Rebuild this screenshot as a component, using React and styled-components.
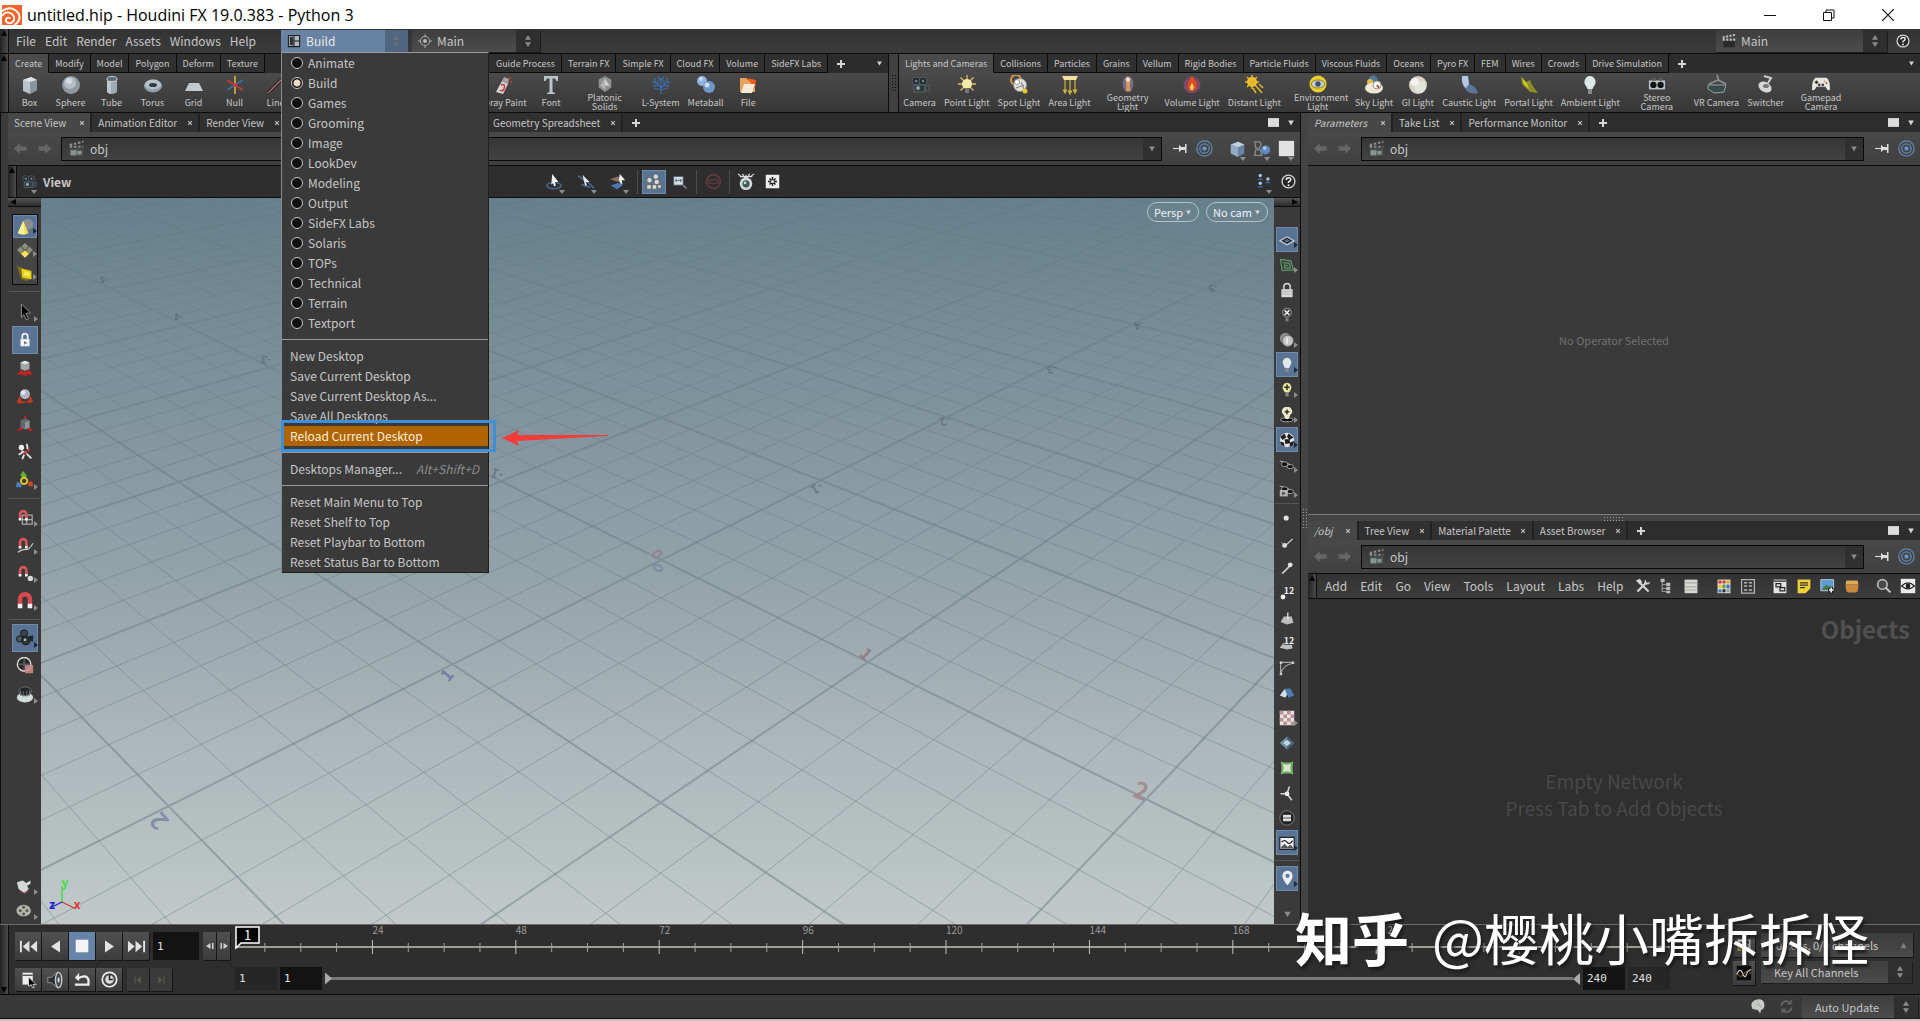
import { useState } from "react";
import styled, { createGlobalStyle, css } from "styled-components";

const GlobalStyle = createGlobalStyle`
  * { box-sizing: border-box; }
  body {
    margin: 0;
    background: #2e2e2e;
    color: #c6c6c6;
    font-family: "Noto Sans CJK SC", "Noto Sans", sans-serif;
    font-size: 12px;
    line-height: 20px;
    overflow: hidden;
  }
  button, input, select {
    font: inherit;
    color: inherit;
    background: none;
    border: 0;
    border-radius: 0;
    padding: 0;
    margin: 0;
    outline: 0;
    min-width: 0;
  }
  svg { display: block; flex: none; }
  h1, p { margin: 0; font: inherit; }
`;

/* ---------- icons ---------- */

const magnet = (
  <>
    <path d="M3 13V7a5 5 0 0 1 10 0v6h-3V7a2 2 0 0 0-4 0v6z" fill="#d8555a" />
    <path d="M3 11h3v3H3zM10 11h3v3h-3z" fill="#f2f2f2" />
  </>
);

const glasses = (
  <>
    <path d="M1 5l10 3 7 5" stroke="#aaa" fill="none" strokeWidth="1.4" />
    <ellipse cx="7" cy="9" rx="4" ry="3" fill="#111" stroke="#bbb" />
    <ellipse cx="14" cy="12" rx="4" ry="2.6" fill="#111" stroke="#bbb" />
  </>
);

const icons = {
  box: (
    <>
      <path d="M3 5l8-3 6 3v10l-7 4-7-3z" fill="#b9c3c9" />
      <path d="M3 5l7 2 7-2-6-3z" fill="#dde3e6" />
      <path d="M10 7l7-2v10l-7 4z" fill="#87949c" />
    </>
  ),
  sphere: (
    <>
      <circle cx="10" cy="10" r="9" fill="#8f9aa0" />
      <circle cx="9" cy="8" r="6" fill="#b5bec2" />
      <circle cx="8" cy="6" r="3" fill="#d6dcde" />
    </>
  ),
  tube: (
    <>
      <path d="M5 4v13q5 4 10 0V4z" fill="#9fabb2" />
      <path d="M5 4v13q2 2 4 2V5z" fill="#bcc6cb" />
      <ellipse cx="10" cy="4" rx="5" ry="2.5" fill="#5d6a72" stroke="#c5ced2" />
    </>
  ),
  torus: (
    <>
      <ellipse cx="10" cy="11" rx="9" ry="6.5" fill="#8ea0aa" />
      <ellipse cx="10" cy="9.5" rx="8" ry="5" fill="#b3c0c7" />
      <ellipse cx="10" cy="10" rx="4" ry="2" fill="#2f3a42" />
    </>
  ),
  grid: <path d="M5 8h10l4 8H1z" fill="#c3c9cc" />,
  nul: (
    <>
      <path d="M10 1v18" stroke="#d9b92a" strokeWidth="1.6" />
      <path d="M2 5l16 10" stroke="#c43a3a" strokeWidth="1.6" />
      <path d="M2 15l16-10" stroke="#3a6fa8" strokeWidth="1.6" />
      <circle cx="10" cy="10" r="2" fill="#c43a3a" />
    </>
  ),
  line: (
    <>
      <path d="M2 18L17 3" stroke="#111" strokeWidth="3" />
      <path d="M2 18L17 3" stroke="#b8747a" strokeWidth="1.4" />
    </>
  ),
  spray: (
    <>
      <path d="M3 17l6-11 6 3-5 10z" fill="#d5d5d5" />
      <path d="M9 6l2-4 5 2-1 5z" fill="#a3a3a3" />
      <path d="M8 10q5-2 3 4-2 3-4 1" stroke="#c33" strokeWidth="1.5" fill="none" />
      <circle cx="17" cy="3" r="1" fill="#d33" />
      <circle cx="18" cy="7" r="1" fill="#d33" />
    </>
  ),
  font: <path d="M3 1h14v5h-1.5L14 3.5h-2.5V17l2.500 1v1H6v-1l2.500-1V3.500H6L4.500 6H3z" fill="#b6c4cb" />,
  platonic: (
    <>
      <path d="M10 1l7 4v9l-7 5-7-5V5z" fill="#909090" />
      <path d="M10 4l5 8H5z" fill="#cfcfcf" />
      <path d="M10 4v12l-5-4z" fill="#b3b3b3" />
    </>
  ),
  lsystem: (
    <g stroke="#3d6ba8" strokeWidth="1.3" fill="none">
      <path d="M10 19v-8M10 13L4 7M10 13l6-6M10 11V3M4 7L1 7M4 7V3M16 7h3M16 7V3M10 6L7 2M10 6l3-4M10 15l-7-2M10 15l7-2M7 10L2 11M13 10l5 1M7 10V5M13 10V5" />
    </g>
  ),
  metaball: (
    <>
      <circle cx="6" cy="6" r="5" fill="#8fb3dd" />
      <circle cx="13" cy="12" r="6" fill="#6d96c9" />
      <circle cx="11" cy="10" r="2.5" fill="#c9dcf2" />
      <circle cx="5" cy="4" r="2" fill="#c9dcf2" />
    </>
  ),
  file: (
    <>
      <path d="M2 3h6l2 2h7v12H2z" fill="#e8a35c" />
      <path d="M9 3l9 2-1 9z" fill="#f05a1c" />
      <path d="M3 18l3-9h11l-3 9z" fill="#f5ead8" />
    </>
  ),
  camera: (
    <>
      <circle cx="6" cy="6" r="4" fill="#20272b" stroke="#56636b" />
      <circle cx="13" cy="6" r="4" fill="#20272b" stroke="#56636b" />
      <path d="M4 10h11v7H4zM15 12l4-2v6l-4-2z" fill="#2f3a40" stroke="#56636b" />
      <circle cx="6" cy="6" r="1.5" fill="#6d7b83" />
      <circle cx="13" cy="6" r="1.5" fill="#6d7b83" />
      <circle cx="8" cy="13" r="2" fill="#8fa0a8" />
    </>
  ),
  point: (
    <>
      <g stroke="#d9c05a" strokeWidth="1.3">
        <path d="M10 0v17M1 9h18M3.500 2.500l13 13M16.500 2.500l-13 13" />
      </g>
      <circle cx="10" cy="9" r="5" fill="#f3e9a8" />
      <path d="M8 13h4v5H8z" fill="#777" />
    </>
  ),
  spot: (
    <>
      <circle cx="7" cy="5" r="5" fill="none" stroke="#d69a50" strokeWidth="2" />
      <circle cx="11" cy="10" r="6.5" fill="#e2e2de" stroke="#8e8e8e" />
      <circle cx="8" cy="7" r="2.5" fill="#fff" stroke="#999" />
      <path d="M12 7l3 7M7 13l8-3" stroke="#777" />
      <circle cx="16" cy="16" r="2.5" fill="#e9c820" />
    </>
  ),
  area: (
    <>
      <path d="M2 1h16l-2 4H4z" fill="#f3dfa0" />
      <g stroke="#cdb43a" strokeWidth="1.2" fill="#cdb43a">
        <path d="M5 5v12M10 5v13M15 5v12M3.500 15h3L5 18zM8.500 16h3L10 19zM13.500 15h3L15 18z" />
      </g>
    </>
  ),
  geolight: (
    <>
      <ellipse cx="10" cy="10" rx="6" ry="9" fill="#756b86" />
      <path d="M10 2q4 5 2 9l1 7h-5V9q-1-4 2-7z" fill="#d99a5a" />
      <circle cx="10" cy="5" r="2.5" fill="#f4e2c0" />
    </>
  ),
  volume: (
    <>
      <circle cx="10" cy="10" r="8.5" fill="#7d4a66" />
      <path d="M10 1q7 8 4 13-4 4-8 0-2-5 4-13z" fill="#e2491d" />
      <path d="M10 8q3 4 1 7-3 1-3-2 0-2 2-5z" fill="#ffd75a" />
    </>
  ),
  distant: (
    <>
      <circle cx="8" cy="7" r="5" fill="#f0cd38" />
      <g stroke="#e3b725" strokeWidth="1.5">
        <path d="M8 0v14M1 7h14M3 2l10 10M13 2L3 12M12 11l6 7M15 9l4 4M9 13l3 5" />
      </g>
    </>
  ),
  env: (
    <>
      <circle cx="10" cy="10" r="9.5" fill="#e8cf2e" />
      <ellipse cx="10" cy="10" rx="7.5" ry="4.5" fill="#c7ced2" stroke="#8b7c1a" />
      <circle cx="10" cy="10" r="3" fill="#3f4f74" />
    </>
  ),
  sky: (
    <>
      <circle cx="9" cy="5" r="4.5" fill="#51799c" />
      <circle cx="6" cy="7" r="3" fill="#e9b940" />
      <ellipse cx="10" cy="13" rx="9" ry="5.5" fill="#ecead6" />
      <circle cx="13" cy="10" r="4" fill="#f4f4ee" stroke="#999" />
      <path d="M13 10l2 3" stroke="#b33" strokeWidth="1.5" />
    </>
  ),
  gi: (
    <>
      <circle cx="10" cy="10" r="9" fill="#d9d3c8" />
      <circle cx="12" cy="12" r="6" fill="#dfe6d6" />
      <circle cx="7" cy="7" r="4" fill="#f4f1ec" />
    </>
  ),
  caustic: (
    <>
      <path d="M3 1h6l1 8q7 2 9 9-8 2-13-4Q2 9 3 1z" fill="#5d7596" />
      <path d="M3 1h6l1 8-3 4Q2 9 3 1z" fill="#b4c8e4" />
    </>
  ),
  portal: (
    <>
      <path d="M2 1l5 6 4-2 2 5 6 8-8-1-8-8z" fill="#8f8d28" />
      <path d="M3 3l5 5 2 6-5-4z" fill="#c9c42c" />
    </>
  ),
  bulb: (
    <>
      <path d="M10 1a6 6 0 0 1 4 10l-1.500 3h-5L6 11a6 6 0 0 1 4-10z" fill="#dce8e8" />
      <path d="M8 14h4v5H8z" fill="#888" />
    </>
  ),
  stereo: (
    <>
      <path d="M1 6h18v10H1z" fill="#b9c2cc" />
      <circle cx="6" cy="11" r="3.5" fill="#111" />
      <circle cx="14" cy="11" r="3.5" fill="#111" />
      <path d="M4 3h5v3H4zM12 3h4v3h-4z" fill="#5a5a5a" />
    </>
  ),
  vr: (
    <>
      <path d="M10 0l2 6M2 9l9-4 8 4" stroke="#8b9896" strokeWidth="1.5" fill="none" />
      <path d="M1 10l13 0 5 0-2 7-10 1-6-4z" fill="#3b4a4a" stroke="#93a3a2" />
    </>
  ),
  switcher: (
    <>
      <path d="M8 1l7 2-3 5" stroke="#ccc" strokeWidth="2" fill="none" />
      <ellipse cx="9" cy="12" rx="7" ry="5" fill="#d8d8d8" transform="rotate(30 9 12)" />
      <ellipse cx="10" cy="11" rx="3" ry="2" fill="#777" />
    </>
  ),
  gamepad: (
    <>
      <path d="M4 3h12q4 2 4 13-2 3-5-3H5q-3 6-5 3Q0 5 4 3z" fill="#e8e4de" />
      <path d="M5 6v4M3 8h4" stroke="#333" strokeWidth="1.5" />
      <circle cx="14" cy="7" r="1" fill="#d69a50" />
      <circle cx="16" cy="9" r="1" fill="#555" />
      <circle cx="8" cy="11" r="1.5" fill="#444" />
      <circle cx="12" cy="11" r="1.5" fill="#444" />
    </>
  ),
  back: <path d="M1 10l8-7v4h9v6H9v4z" fill="#666" />,
  forward: <path d="M19 10l-8-7v4H2v6h9v4z" fill="#666" />,
  clapper: (
    <>
      <path d="M2 6L18 2M2 8h16" stroke="#8d8d8d" strokeWidth="2.5" strokeDasharray="3 2" />
      <path d="M2 10h16v9H2z" fill="#4b4f4f" />
      <path d="M3 12h7v6H3zM11 13l5 0v4h-5z" fill="#8a9292" />
    </>
  ),
  slate: (
    <>
      <path d="M1 5L19 1M1 8h18" stroke="#bdbdbd" strokeWidth="3" strokeDasharray="3 2" />
      <path d="M2 10h16v9H2z" fill="#2a2a2a" />
    </>
  ),
  pin: (
    <>
      <path d="M0 10h9" stroke="#ddd" strokeWidth="1.5" />
      <path d="M8 5l3 3h5V4h2v12h-2v-4h-5l-3 3z" fill="#ddd" />
    </>
  ),
  target: (
    <g fill="none" stroke="#5f86b3" strokeWidth="1.5">
      <circle cx="10" cy="10" r="9" />
      <circle cx="10" cy="10" r="5.5" />
      <circle cx="10" cy="10" r="2" fill="#7fa3cc" />
    </g>
  ),
  cube: (
    <>
      <path d="M2 5l8-3 7 3v10l-7 4-8-4z" fill="#6884a3" />
      <path d="M2 5l8 3 7-3-7-3z" fill="#c3d0dd" />
      <path d="M2 5l8 3v11l-8-4z" fill="#93a9c0" />
    </>
  ),
  shapes: (
    <>
      <path d="M2 2h5q4 2 0 7H3zM3 11h5l2 6H2z" stroke="#8b8b8b" fill="none" strokeWidth="1.5" />
      <circle cx="14" cy="11" r="5" fill="#5d8cc6" />
      <circle cx="13" cy="9" r="2" fill="#a9c6ea" />
    </>
  ),
  swatch: <path d="M1 1h18v18H1z" fill="#e2e2e2" />,
  help: (
    <>
      <circle cx="10" cy="10" r="8.5" fill="#262626" stroke="#d5d5d5" strokeWidth="1.8" />
      <path d="M7 8q0-3 3-3t3 2.500q0 1.500-3 3V12" stroke="#eee" strokeWidth="2" fill="none" />
      <circle cx="10" cy="15" r="1.3" fill="#eee" />
    </>
  ),
  net: (
    <>
      <circle cx="5" cy="3" r="2" fill="#a9c4e2" />
      <circle cx="5" cy="12" r="2" fill="#a9c4e2" />
      <circle cx="14" cy="7" r="2" fill="#a9c4e2" />
      <path d="M1 8q4-4 8 0zM1 17q4-4 8 0zM10 12q4-4 8 0z" fill="#3f679b" />
    </>
  ),
  selectRing: (
    <>
      <ellipse cx="10" cy="14" rx="8" ry="3.5" fill="none" stroke="#46648c" strokeWidth="1.8" />
      <path d="M8 1l7 9-4 0 1 4-2 1-1-4-2 2z" fill="#f2f2f2" />
    </>
  ),
  selectLine: (
    <>
      <path d="M1 3l12 8 6 6M5 13l10 3" stroke="#46648c" strokeWidth="2" />
      <path d="M6 2l8 8-4 0 1 4-2 0-1-4z" fill="#e6e6e6" />
    </>
  ),
  selectFace: (
    <>
      <path d="M1 7l9-3 6 2-5 4z" fill="#8b6f5c" />
      <path d="M2 14l8-3 6 2-7 5z" fill="#4d79b8" />
      <path d="M12 1l6 7-4 0 1 4-2 0-2-4z" fill="#f2f2f2" />
    </>
  ),
  groups: (
    <g fill="#dadad0" stroke="#555" strokeWidth="0.8">
      <circle cx="12" cy="4" r="3" />
      <circle cx="5" cy="8" r="3" />
      <circle cx="13" cy="10" r="3" />
      <path d="M2 13h5v5H2zM8 13h5v5H8zM14 13h4v4h-4z" />
    </g>
  ),
  zoomBox: (
    <>
      <path d="M2 3h12v11H2z" fill="#d8dde0" stroke="#3b5573" />
      <path d="M4 8h8M6 6L4 8l2 2M10 6l2 2-2 2" stroke="#3b5573" fill="none" />
      <path d="M14 14l4 4" stroke="#888" strokeWidth="2" />
    </>
  ),
  noEntry: (
    <>
      <circle cx="10" cy="10" r="8" fill="none" stroke="#613b3e" strokeWidth="2" />
      <path d="M5 8h10v4H5z" fill="none" stroke="#613b3e" strokeWidth="1.5" />
    </>
  ),
  bug: (
    <>
      <path d="M3 4h14M1 1l4 3M19 1l-4 3M10 2v4M6 1l3 5M14 1l-3 5" stroke="#ddd" strokeWidth="1.3" />
      <circle cx="10" cy="12" r="7" fill="#d5d8d8" />
      <circle cx="10" cy="12" r="4" fill="#3b5a55" />
      <circle cx="9" cy="11" r="1.5" fill="#b7e0d8" />
    </>
  ),
  gear: (
    <>
      <path d="M1 1h18v18H1z" fill="#efefef" />
      <path d="M10 4v12M4 10h12M6 6l8 8M14 6l-8 8" stroke="#222" strokeWidth="2" />
      <circle cx="10" cy="10" r="2" fill="#efefef" />
    </>
  ),
  objSel: (
    <>
      <circle cx="13" cy="7" r="6" fill="#8b8f8f" />
      <path d="M8 3l6 14q-6 3-12 0z" fill="#f2dc55" />
      <path d="M8 3l2 15q-5 0-8-1z" fill="#f9ef9c" />
    </>
  ),
  compSel: (
    <g stroke="#5a5a50" strokeWidth="0.6">
      <path d="M10 2l4 4-4 4-4-4zM5 6l4 4-4 4-4-4zM15 6l4 4-4 4-4-4z" fill="#8d8d80" />
      <path d="M10 10l5 4-5 5-5-5z" fill="#f0e05c" />
    </g>
  ),
  dynSel: (
    <>
      <path d="M1 2l7 3 9 2 1 9-6 3-6-2z" fill="#7d6e1a" />
      <path d="M6 5l11 3v9l-10-2z" fill="#ecd21d" />
      <path d="M9 8l6 2v4l-6-2z" fill="#f8ec5c" />
    </>
  ),
  arrow: <path d="M6 1l10 10-5 .5 3 6-2.500 1.200-3-6L6 16z" fill="#050505" stroke="#a5a5a5" strokeWidth="0.9" />,
  lockSel: (
    <>
      <path d="M7 9V6a3 3 0 0 1 6 0v3" fill="none" stroke="#eee" strokeWidth="2" />
      <path d="M5 9h10v8H5z" fill="#f2f2f2" />
      <path d="M9 11l4 3-3 0-1 2z" fill="#567" />
    </>
  ),
  lock: (
    <>
      <path d="M6 9V6a4 4 0 0 1 8 0v3" fill="none" stroke="#ccc" strokeWidth="2" />
      <path d="M3 9h14v10H3z" fill="#dcdcdc" />
      <path d="M3 12h14M3 15h14" stroke="#aaa" />
    </>
  ),
  move: (
    <>
      <path d="M1 18l5-7 1 3h6l1-3 5 7-5-1-4 2-4-2z" fill="#c4221c" />
      <path d="M5 4l5-2 5 2v7l-5 2-5-2z" fill="#9fa8a4" />
      <path d="M5 4l5 2 5-2-5-2z" fill="#dfe6e2" />
    </>
  ),
  rotate: (
    <>
      <path d="M1 16l3-6 3 6 6 0 3-6 3 5-3 3-4-1-4 1-6 0z" fill="#c23a1c" />
      <circle cx="10" cy="8" r="5.5" fill="#aeb4c4" />
      <circle cx="8" cy="6" r="2.5" fill="#e6e9f2" />
    </>
  ),
  scale: (
    <>
      <path d="M10 0l2 4H8zM1 18l5-6 1 5zM19 18l-5-6-1 5z" fill="#c4221c" />
      <path d="M5 6l5-2 5 2v8l-5 2-5-2z" fill="#636b6e" />
      <path d="M10 8l5-2v8l-5 2z" fill="#8a9498" />
    </>
  ),
  pose: (
    <>
      <circle cx="6" cy="5" r="3" fill="#eee" />
      <path d="M12 1l1 6M6 9l6 2M7 18l2-5M17 17l-5-5M3 13l5-3" stroke="#e3e3e3" strokeWidth="2" />
      <circle cx="10" cy="11" r="1.8" fill="#c33" />
      <circle cx="14" cy="8" r="1.5" fill="#c33" />
    </>
  ),
  handles: (
    <>
      <path d="M8 0l4 5-1 3-5-1-1-3z" fill="#5db12f" />
      <path d="M0 18l1-6 5 2v4z" fill="#4d7ec4" />
      <path d="M19 17l-1-6-5 2 1 4z" fill="#d44528" />
      <circle cx="9" cy="11" r="3.5" fill="none" stroke="#d8c62c" strokeWidth="2.2" />
    </>
  ),
  magGrid: (
    <>
      <path d="M7 8h11v10H7zM7 13h11M12 8v10" stroke="#aaa" fill="none" strokeWidth="1.3" />
      {magnet}
    </>
  ),
  magCurve: (
    <>
      <path d="M2 18q6-4 9-3t8-7" stroke="#ccc" fill="none" strokeWidth="1.3" />
      {magnet}
    </>
  ),
  magPoint: (
    <>
      {magnet}
      <circle cx="16" cy="16" r="3" fill="#d8dcd8" />
    </>
  ),
  magnet: (
    <>
      <path d="M2 17V8a8 8 0 0 1 16 0v9h-5V8a3 3 0 0 0-6 0v9z" fill="#d94a50" />
      <path d="M2 13h5v5H2zM13 13h5v5h-5z" fill="#f2f2f2" />
    </>
  ),
  viewTool: (
    <>
      <circle cx="9" cy="5" r="4" fill="#3b4448" stroke="#151515" />
      <circle cx="4" cy="11" r="3.5" fill="#4c565a" stroke="#151515" />
      <circle cx="11" cy="13" r="4.5" fill="#2c3437" stroke="#151515" />
      <path d="M14 8l5-1v7l-5-1z" fill="#20272b" />
      <circle cx="10" cy="12" r="1.5" fill="#b5c2c4" />
    </>
  ),
  render: (
    <>
      <circle cx="9" cy="8" r="7.5" fill="#2b2b2b" stroke="#ddd" strokeWidth="1.5" />
      <path d="M9 1v14M2 8h14" stroke="#777" />
      <path d="M10 9h9v9h-9z" fill="#d78f92" opacity=".85" />
    </>
  ),
  flipbook: (
    <>
      <ellipse cx="10" cy="14" rx="9" ry="5.5" fill="#cfdcd8" />
      <ellipse cx="10" cy="7" rx="7" ry="5" fill="#20262a" stroke="#777" />
      <path d="M5 6v6M8 7v6M12 7v6M15 6v6" stroke="#777" />
    </>
  ),
  hand: (
    <>
      <path d="M1 5l7-2 4 3 5-3v4l-4 2 2 4-5 5-7-5z" fill="#d5d8d8" />
      <path d="M5 16q5 3 9 0" stroke="#b44" fill="none" />
    </>
  ),
  film: (
    <>
      <ellipse cx="9" cy="9" rx="8.5" ry="7" fill="#b3b3a8" />
      <g fill="#555">
        <circle cx="9" cy="5" r="1.7" />
        <circle cx="5" cy="9" r="1.7" />
        <circle cx="13" cy="9" r="1.7" />
        <circle cx="9" cy="13" r="1.7" />
      </g>
    </>
  ),
  plane: (
    <>
      <path d="M1 11l9-5 9 5-9 5z" fill="none" stroke="#c6ccd2" strokeWidth="1.3" />
      <path d="M5 11l5-3 5 3-5 3z" fill="none" stroke="#222" strokeWidth="1.3" />
    </>
  ),
  greenGrid: <path d="M2 3l13 2 3 11-14 1zM5 7l8 1 1 6-7 0 0-4 4 1" fill="none" stroke="#5b9a68" strokeWidth="1.6" />,
  bulbOff: (
    <>
      <circle cx="10" cy="7" r="5.5" fill="none" stroke="#888" strokeWidth="1.3" />
      <path d="M7 4l6 6M13 4l-6 6" stroke="#eee" strokeWidth="2" />
      <path d="M8 13h4v5H8z" fill="#777" />
    </>
  ),
  balls: (
    <>
      <circle cx="8" cy="8" r="7" fill="#8b8b8b" />
      <circle cx="11" cy="11" r="7" fill="#c4c4c4" stroke="#666" />
      <path d="M10 7v8" stroke="#eee" strokeWidth="2" />
    </>
  ),
  bulbPlus: (
    <>
      <path d="M10 1a6 6 0 0 1 4 10l-1.500 2h-5L6 11a6 6 0 0 1 4-10z" fill="#e6ec9c" />
      <path d="M10 3v7M6.500 6.500h7" stroke="#333" strokeWidth="2" />
      <path d="M8 13h4v5H8z" fill="#888" />
    </>
  ),
  bulbShadow: (
    <>
      <ellipse cx="10" cy="16" rx="8" ry="2.5" fill="#000" stroke="#ccc" />
      <path d="M10 0a5.500 5.500 0 0 1 4 10l-2 5h-4l-2-5a5.500 5.500 0 0 1 4-10z" fill="#eee9c8" />
      <path d="M10 3v6M7 6h6" stroke="#333" strokeWidth="2" />
    </>
  ),
  checker: (
    <>
      <circle cx="10" cy="10" r="9" fill="#e4e4e4" />
      <path d="M2 6l5-4 2 5-5 3zM12 2l6 5-5 3-3-4zM7 9l6 0 1 5-6 1zM1 12l5 1 1 5-4-2zM14 13l5-2-2 6-4 1z" fill="#1d1d1d" />
    </>
  ),
  glasses,
  glassesPlay: (
    <>
      {glasses}
      <path d="M1 10h10v8H1z" fill="#b4b4b4" />
      <path d="M4 12l5 2-5 3z" fill="#555" />
    </>
  ),
  dot: <circle cx="9" cy="10" r="3.2" fill="#e2e2e2" />,
  dotVec: (
    <>
      <path d="M7 14L17 5" stroke="#ccc" strokeWidth="1.5" />
      <circle cx="7" cy="13" r="3" fill="#ddd" />
      <path d="M3 9l2 2" stroke="#ccc" />
    </>
  ),
  dotLine: (
    <>
      <path d="M4 17l9-9" stroke="#ccc" strokeWidth="2" />
      <circle cx="14" cy="6" r="3" fill="#e2e2e2" />
    </>
  ),
  pointNum: (
    <>
      <circle cx="5" cy="15" r="3" fill="#eee" />
      <text x="6" y="11" fontSize="11" fontWeight="700" fill="#eee">12</text>
    </>
  ),
  primFace: (
    <>
      <path d="M2 15l4-7 10 0 2 8-8 2z" fill="#bdbdbd" />
      <path d="M11 12V3" stroke="#eee" strokeWidth="1.5" />
    </>
  ),
  primNum: (
    <>
      <path d="M1 16l5-7 10 2 1 6-7 1z" fill="#bdbdbd" />
      <text x="6" y="11" fontSize="11" fontWeight="700" fill="#eee" stroke="#3a3a3a" strokeWidth="2" paintOrder="stroke">12</text>
    </>
  ),
  hull: (
    <>
      <path d="M2 18V3h16M2 18Q4 6 18 4" fill="none" stroke="#a8a8a8" strokeWidth="1.4" />
      <path d="M1 2h3v3H1zM16 2h3v3h-3zM1 16h3v3H1z" fill="#ccc" />
    </>
  ),
  normals: (
    <>
      <path d="M1 13l6-8 5 3-4 8z" fill="#d5dde5" />
      <path d="M7 5l7-1 5 9-7 3z" fill="#4c7db5" />
    </>
  ),
  uv: (
    <>
      <path d="M1 1h18v18H1z" fill="#e8e2e6" />
      <path d="M1 1h4.500v4.500H1zM10 1h4.500v4.500H10zM5.500 5.500H10V10H5.500zM14.500 5.500H19V10h-4.500zM1 10h4.500v4.500H1zM10 10h4.500v4.500H10zM5.500 14.500H10V19H5.500zM14.500 14.500H19V19h-4.500z" fill="#b99393" />
    </>
  ),
  diamond: (
    <>
      <path d="M1 10l9-8 9 8-9 8z" fill="#6f8fa6" />
      <path d="M10 2l9 8-9 8z" fill="#47637c" />
      <path d="M5 10l5-4 5 4-5 4z" fill="#b8d4dc" />
    </>
  ),
  greenBox: (
    <>
      <path d="M2 2l5 1h6l5-1-1 5v6l1 5-5-1H7l-5 1 1-5V7z" fill="#7ab06d" />
      <path d="M5 5l5 1 5-1-1 5 1 5-5-1-5 1 1-5z" fill="#d5e8cc" />
    </>
  ),
  axes: (
    <>
      <path d="M10 11l3-9M10 11l-8 0M10 11l6 8" stroke="#ddd" strokeWidth="1.8" />
      <circle cx="10" cy="11" r="3" fill="#f2f2f2" />
    </>
  ),
  equals: (
    <>
      <circle cx="10" cy="10" r="9" fill="#222" stroke="#8a8a8a" />
      <path d="M5 6h10v8H5z" fill="#ddd" />
      <path d="M5 10h10" stroke="#333" />
    </>
  ),
  image: (
    <>
      <path d="M1 3h18v15H1z" fill="#f2f2f2" stroke="#222" strokeWidth="1.5" />
      <path d="M2 16l5-5 4 4 3-3 4 4v1H2z" fill="#555" />
      <path d="M3 9q4-4 7 0t7-2" stroke="#222" strokeWidth="1.5" fill="none" />
    </>
  ),
  marker: (
    <>
      <path d="M10 1a6 6 0 0 1 6 6q0 4-6 11Q4 11 4 7a6 6 0 0 1 6-6z" fill="#eee" />
      <circle cx="10" cy="7" r="2.5" fill="#5b7ba3" />
    </>
  ),
  wrench: (
    <>
      <path d="M3 17L14 6M17 17L5 5" stroke="#d5d5d5" strokeWidth="2.6" />
      <path d="M13 2q-3 5 1 6 4 1 5-3l-3 1-2-1zM1 3l5-2 3 4-3 3z" fill="#d5d5d5" />
    </>
  ),
  tree: (
    <>
      <path d="M2 1h5v4H2zM9 6h5v4H9zM9 11h5v4H9zM9 16h5v3H9z" fill="#bbb" />
      <path d="M4 5v12h5M4 8h5M4 13h5" stroke="#bbb" fill="none" />
    </>
  ),
  list: (
    <>
      <path d="M2 2h16v17H2z" fill="#d8d8d2" />
      <path d="M2 6h16M2 11h16M2 15h16" stroke="#aaa" strokeWidth="1.5" />
    </>
  ),
  palette: (
    <>
      <path d="M2 2h16v17H2z" fill="#eee" />
      <path d="M3 3h4v4H3zM8 3h4v4H8z" fill="#c33a2a" />
      <path d="M13 3h4v4h-4z" fill="#e2a426" />
      <path d="M3 8h4v5H3z" fill="#e8c33a" />
      <path d="M8 8h4v5H8z" fill="#5da044" />
      <path d="M13 8h4v5h-4zM3 14h4v4H3z" fill="#3f78b8" />
      <path d="M8 14h4v4H8z" fill="#333" />
      <path d="M13 14h4v4h-4z" fill="#999" />
    </>
  ),
  gridList: (
    <>
      <path d="M2 2h16v17H2z" fill="none" stroke="#b5b5b5" strokeWidth="1.5" />
      <path d="M5 6h4M11 6h4M5 10h4M11 10h4M5 15h4M11 15h4" stroke="#b5b5b5" strokeWidth="2" />
    </>
  ),
  layout: (
    <>
      <path d="M2 2h16v17H2z" fill="#e4e4e4" />
      <path d="M2 4h16M5 7h6v4H5zM10 12h6v4h-6z" stroke="#222" strokeWidth="1.5" fill="none" />
    </>
  ),
  note: (
    <>
      <path d="M2 2h16v11l-6 6H2z" fill="#efd03a" />
      <path d="M5 6h10M5 9h10M5 12h6" stroke="#333" strokeWidth="1.5" />
    </>
  ),
  picture: (
    <>
      <path d="M1 2h16v14H1z" fill="#5f9bd5" stroke="#cfd8e0" />
      <path d="M2 15l6-7 8 7z" fill="#3f7c46" />
      <path d="M14 11v8M10 15h8" stroke="#111" strokeWidth="4" />
      <path d="M14 12v6M11 15h6" stroke="#fff" strokeWidth="2" />
    </>
  ),
  barrel: (
    <>
      <path d="M2 8h16q0 9-3 10H5Q2 17 2 8z" fill="#c68a3c" />
      <path d="M3 3h14l1 5H2z" fill="#e2a955" />
    </>
  ),
  search: (
    <>
      <circle cx="8" cy="8" r="6" fill="#4a4a4a" stroke="#bbb" strokeWidth="2" />
      <path d="M12 12l6 6" stroke="#ccc" strokeWidth="2.5" />
    </>
  ),
  eye: (
    <>
      <path d="M1 1h18v18H1z" fill="#eee" />
      <path d="M2 10q8-8 16 0-8 7-16 0z" fill="#fff" stroke="#222" strokeWidth="1.5" />
      <circle cx="10" cy="10" r="3" fill="#222" />
    </>
  ),
  toStart: <path d="M1 4h2v12H1zM11 4v12L4 10zM19 4v12l-7-6z" fill="#e2e2e2" />,
  playBack: <path d="M16 2v16L4 10z" fill="#e2e2e2" />,
  stop: <path d="M3 3h14v14H3z" fill="#f4f4f4" />,
  play: <path d="M4 2v16l12-8z" fill="#e2e2e2" />,
  toEnd: <path d="M17 4h2v12h-2zM1 4v12l7-6zM9 4v12l7-6z" fill="#e2e2e2" />,
  stepBack: <path d="M11 4v12L2 10zM14 4h3v12h-3z" fill="#cfcfcf" />,
  stepFwd: <path d="M9 4v12l9-6zM3 4h3v12H3z" fill="#cfcfcf" />,
  keyBack: <path d="M4 4h2v12H4zM15 4v12l-8-6z" fill="#55564c" />,
  keyFwd: <path d="M14 4h2v12h-2zM5 4v12l8-6z" fill="#55564c" />,
  doc: (
    <>
      <path d="M3 2h12v14H3z" fill="#eee" />
      <path d="M3 5h12" stroke="#444" strokeWidth="1.5" />
      <path d="M10 7l9 9-4 0 2 3-2 1-2-4-3 2z" fill="#000" stroke="#ddd" />
    </>
  ),
  speaker: (
    <>
      <path d="M2 7h4l7-6v18l-7-6H2z" fill="#2b3133" stroke="#999" />
      <ellipse cx="14" cy="10" rx="3.5" ry="8.5" fill="#3f484b" stroke="#ccc" strokeWidth="1.5" />
      <ellipse cx="14" cy="10" rx="1.2" ry="3" fill="#cdd" />
    </>
  ),
  loop: (
    <>
      <path d="M4 9q10-6 13 1v6H1" fill="none" stroke="#eee" strokeWidth="2.6" />
      <path d="M1 8l5-6v10z" fill="#eee" />
    </>
  ),
  clock: (
    <>
      <circle cx="10" cy="10" r="8.5" fill="none" stroke="#eee" strokeWidth="2" />
      <circle cx="10" cy="10" r="5" fill="#ddd" />
      <path d="M10 4v6h4" stroke="#222" strokeWidth="1.8" fill="none" />
    </>
  ),
  keys: (
    <>
      <path d="M2 3h16v14H2z" fill="#c9c9c0" />
      <path d="M4 6h5v4H4zM11 5h5v3h-5z" fill="#333" />
      <path d="M3 13h6v4H3z" fill="#b5a838" />
    </>
  ),
  curve: (
    <>
      <path d="M1 1h18v18H1z" fill="#0b0b0b" />
      <path d="M1 12q4-10 7-2t5 2 6-6" stroke="#ddd" fill="none" strokeWidth="1.3" />
      <path d="M1 10q5 8 9 1t9 0" stroke="#a88a4a" fill="none" />
    </>
  ),
  brain: (
    <>
      <path d="M3 13q-4-8 4-11 9-2 10 6 0 5-4 6l-1 4-3-4z" fill="#c9ccc9" />
      <path d="M5 6l9 4M8 3l5 9" stroke="#aaa" />
    </>
  ),
  refresh: (
    <g fill="none" stroke="#666" strokeWidth="2.5">
      <path d="M3 9a7 7 0 0 1 12-4M17 11a7 7 0 0 1-12 4" />
      <path d="M16 1v5h-5M4 19v-5h5" strokeWidth="1.8" />
    </g>
  ),
  desk: (
    <>
      <path d="M2 2h16v16H2z" fill="#b4b8ba" stroke="#1c1c1c" strokeWidth="1.5" />
      <path d="M4 4h5v12H4z" fill="#2e3338" />
      <path d="M10 2v16M10 10h8" stroke="#1c1c1c" strokeWidth="1.5" />
    </>
  ),
  aim: (
    <>
      <circle cx="10" cy="10" r="6.5" fill="none" stroke="#aaa" strokeWidth="1.5" />
      <circle cx="10" cy="10" r="2.8" fill="#bbb" />
      <path d="M10 0v4M10 16v4M0 10h4M16 10h4" stroke="#aaa" strokeWidth="1.5" />
    </>
  ),
  plus: <path d="M8 2h4v6h6v4h-6v6H8v-6H2V8h6z" fill="#d5d5d5" />,
  down: <path d="M3 4h14l-7 12z" fill="#d5d5d5" />,
  downDim: <path d="M3 4h14l-7 12z" fill="#8b8b8b" />,
  upDim: <path d="M3 16h14L10 4z" fill="#7d7d7d" />,
  spin: <path d="M5 8l5-8 5 8zM5 12l5 8 5-8z" fill="#8b8b8b" />,
  maxi: <path d="M0 2h20v16H0z" fill="#dcdcdc" />,
  cross: <path d="M4 4l12 12M16 4L4 16" stroke="#bdbdbd" strokeWidth="4" />,
};

function Icon({ name, size = 18 }) {
  return (
    <svg width={size} height={size} viewBox="0 0 20 20" aria-hidden="true">
      {icons[name]}
    </svg>
  );
}

/* ---------- frame ---------- */

const Window = styled.div`
  position: relative;
  display: flex;
  flex-direction: column;
  height: 100vh;
  border-bottom: 2px solid #c9c4c4;
`;

const TitleBar = styled.header`
  display: flex;
  align-items: center;
  gap: 5px;
  flex: none;
  height: 29px;
  padding: 0 5px 0 2px;
  background: #fff;
  color: #000;
`;

const Title = styled.h1`
  flex: 1;
  font-family: "Open Sans", "Noto Sans", sans-serif;
  font-size: 16px;
`;

const WindowButton = styled.button`
  display: grid;
  place-items: center;
  width: 54px;
  height: 29px;
`;

const MenuBar = styled.nav`
  display: flex;
  align-items: center;
  flex: none;
  height: 25px;
  padding-right: 5px;
  background: linear-gradient(#333, #3b3b3b);
  border-bottom: 1px solid #0c0c0c;
`;

const Grip = styled.div`
  display: flex;
  flex: none;
  align-self: stretch;
  width: 9px;
  background: linear-gradient(90deg, #222, #4a4a4a);
  border-right: 1px solid #0c0c0c;
  justify-content: center;
  align-items: ${props => (props.$end ? "flex-end" : "flex-start")};
`;

function CollapseGrip({ down }) {
  return (
    <Grip $end={down}>
      <svg width="8" height="9" viewBox="0 0 8 9" aria-hidden="true">
        <path d={down ? "M1 2h6L4 8z" : "M1 7h6L4 1z"} fill="#050505" />
      </svg>
    </Grip>
  );
}

const MenuList = styled.div`
  display: flex;
  gap: 9px;
  padding-left: 7px;
`;

const MenuButton = styled.button`
  white-space: nowrap;
`;

const Picker = styled.label`
  display: flex;
  align-items: center;
  gap: 5px;
  width: ${props => props.$width};
  height: 22px;
  padding-left: ${props => (props.$plain ? "13px" : "6px")};
  background: linear-gradient(#3e3e3e, #4c4c4c);
  box-shadow: 1px 1px 0 #1d1d1d;
`;

const PickerSelect = styled.select`
  flex: 1;
  appearance: none;
`;

const Stepper = styled.span`
  display: grid;
  place-items: center;
  align-self: stretch;
  width: 24px;
  background: #2f2f2f;
`;

function SelectBox({ label, value, icon, width }) {
  return (
    <Picker $width={width} $plain={!icon}>
      {icon && <Icon name={icon} size={14} />}
      <PickerSelect aria-label={label}>
        <option>{value}</option>
      </PickerSelect>
      <Stepper>
        <Icon name="spin" size={12} />
      </Stepper>
    </Picker>
  );
}

/* ---------- desktop menu ---------- */

const DesktopMenu = styled.div`
  position: relative;
  width: 127px;
  margin: 0 4px 0 25px;
`;

const DesktopButton = styled.button`
  display: flex;
  align-items: center;
  gap: 5px;
  width: 100%;
  height: 22px;
  padding-left: 6px;
  text-align: left;
  color: #e8e8e8;
  background: linear-gradient(90deg, #6883a3 0 104px, #50657f 104px);
`;

const ButtonText = styled.span`
  flex: 1;
`;

const DeskStepper = styled.span`
  display: grid;
  place-items: center;
  width: 24px;
  opacity: 0.35;
`;

const Popup = styled.div`
  position: absolute;
  z-index: 10;
  top: 22px;
  left: 1px;
  width: 207px;
  background: #3a3a3a;
  border: solid #1f1f1f;
  border-width: 0 1px 1px 0;
  border-top: 1px solid #9a9a9a;
  box-shadow: -1px 0 0 #8b8b8b;
`;

const RadioRow = styled.label`
  display: flex;
  align-items: center;
  gap: 5px;
  height: 20px;
  padding-left: 9px;
`;

const Radio = styled.input`
  appearance: none;
  width: 12px;
  height: 12px;
  border: 1px solid #c6c6c6;
  border-radius: 50%;
  background: #101010;
  &:checked {
    background: radial-gradient(#f0d9c4 0 3px, #101010 4px);
  }
`;

const MenuItem = styled.button`
  position: relative;
  display: flex;
  justify-content: space-between;
  width: 100%;
  height: 20px;
  padding: 0 9px 0 8px;
  text-align: left;
  white-space: nowrap;
  ${props =>
    props.$active &&
    css`
      color: #fbeedb;
      background: #b06400;
    `}
`;

const Shortcut = styled.em`
  color: #8b8b8b;
`;

const MenuRule = styled.hr`
  height: 1px;
  margin: 6px 0;
  border: 0;
  background: #9a9a9a;
`;

const Callout = styled.span`
  position: absolute;
  z-index: 11;
  inset: -6px -8px -6px -1px;
  border: 3px solid #3d8fd8;
`;

const CalloutArrow = styled.svg`
  position: absolute;
  z-index: 11;
  top: 3px;
  left: 220px;
`;

const desktops = [
  "Animate", "Build", "Games", "Grooming", "Image", "LookDev", "Modeling",
  "Output", "SideFX Labs", "Solaris", "TOPs", "Technical", "Terrain", "Textport",
];

function DesktopPicker() {
  const [desktop, setDesktop] = useState("Build");

  return (
    <DesktopMenu>
      <DesktopButton aria-haspopup="menu" aria-expanded="true">
        <Icon name="desk" size={14} />
        <ButtonText>{desktop}</ButtonText>
        <DeskStepper><Icon name="spin" size={12} /></DeskStepper>
      </DesktopButton>
      <Popup>
        {desktops.map(name => (
          <RadioRow key={name}>
            <Radio
              type="radio"
              name="desktop"
              checked={desktop === name}
              onChange={() => setDesktop(name)}
            />
            {name}
          </RadioRow>
        ))}
        <MenuRule />
        <MenuItem>New Desktop</MenuItem>
        <MenuItem>Save Current Desktop</MenuItem>
        <MenuItem>Save Current Desktop As...</MenuItem>
        <MenuItem>Save All Desktops</MenuItem>
        <MenuItem $active>
          Reload Current Desktop
          <Callout />
          <CalloutArrow width="108" height="18" viewBox="0 0 108 18" aria-hidden="true">
            <path d="M0 9L17 1l-2 5L106 6v1L15 12l2 5z" fill="#f23c38" />
          </CalloutArrow>
        </MenuItem>
        <MenuRule />
        <MenuItem>
          Desktops Manager... <Shortcut>Alt+Shift+D</Shortcut>
        </MenuItem>
        <MenuRule />
        <MenuItem>Reset Main Menu to Top</MenuItem>
        <MenuItem>Reset Shelf to Top</MenuItem>
        <MenuItem>Reset Playbar to Bottom</MenuItem>
        <MenuItem>Reset Status Bar to Bottom</MenuItem>
      </Popup>
    </DesktopMenu>
  );
}

/* ---------- shelves ---------- */

const Shelves = styled.section`
  display: flex;
  flex: none;
  height: 59px;
  border-bottom: 1px solid #0c0c0c;
`;

const Shelf = styled.div`
  flex: ${props => props.$grow} 1 0;
  min-width: 0;
  overflow: hidden;
`;

const ShelfGrip = styled.div`
  display: grid;
  place-items: center;
  width: 11px;
  border: solid #0c0c0c;
  border-width: 0 1px;
  background: #404040;
  &::after {
    content: "";
    width: 6px;
    height: 18px;
    background: radial-gradient(circle, #0a0a0a 1px, transparent 1px) 0 0 / 3px 3px;
  }
`;

const ShelfTabs = styled.div`
  display: flex;
  height: 19px;
  background: #2c2c2c;
`;

const ShelfTab = styled.button`
  flex: none;
  height: 19px;
  padding: 0 6px;
  font-size: 9px;
  line-height: 20px;
  white-space: nowrap;
  border-right: 1px solid #0c0c0c;
  border-bottom: 1px solid ${props => (props.$active ? "#4a4a4a" : "#0c0c0c")};
  background: ${props => (props.$active ? "#4a4a4a" : "#303030")};
`;

const Gap = styled.span`
  flex: none;
  width: ${props => props.$width};
`;

const BarIconButton = styled.button`
  display: grid;
  place-items: center;
  width: ${props => (props.$narrow ? "18px" : "26px")};
  ${props => props.$end && "margin-left: auto;"}
`;

const Tools = styled.div`
  display: flex;
  height: 39px;
  background: linear-gradient(#4a4a4a, #373737);
`;

const Tool = styled.button`
  flex: none;
  display: flex;
  flex-direction: column;
  align-items: center;
  min-width: 41px;
  ${props => props.$wrap && "width: 66px;"}
  padding: ${props => (props.$wrap ? "2px 8px 0" : "2px 4px 0")};
  gap: ${props => (props.$wrap ? "0" : "1px")};
  font-size: 9px;
  line-height: ${props => (props.$wrap ? "9px" : "13px")};
`;

const createTabs = ["Create", "Modify", "Model", "Polygon", "Deform", "Texture"];
const effectTabs = ["Guide Process", "Terrain FX", "Simple FX", "Cloud FX", "Volume", "SideFX Labs"];
const lightTabs = [
  "Lights and Cameras", "Collisions", "Particles", "Grains", "Vellum", "Rigid Bodies",
  "Particle Fluids", "Viscous Fluids", "Oceans", "Pyro FX", "FEM", "Wires", "Crowds",
  "Drive Simulation",
];

const createTools = [
  ["box", "Box"], ["sphere", "Sphere"], ["tube", "Tube"], ["torus", "Torus"],
  ["grid", "Grid"], ["nul", "Null"], ["line", "Line"],
];
const moreTools = [
  ["spray", "Spray Paint"], ["font", "Font"], ["platonic", "Platonic Solids", true],
  ["lsystem", "L-System"], ["metaball", "Metaball"], ["file", "File"],
];
const lightTools = [
  ["camera", "Camera"], ["point", "Point Light"], ["spot", "Spot Light"],
  ["area", "Area Light"], ["geolight", "Geometry Light", true], ["volume", "Volume Light"],
  ["distant", "Distant Light"], ["env", "Environment Light", true], ["sky", "Sky Light"],
  ["gi", "GI Light"], ["caustic", "Caustic Light"], ["portal", "Portal Light"],
  ["bulb", "Ambient Light"], ["stereo", "Stereo Camera", true], ["vr", "VR Camera"],
  ["switcher", "Switcher"], ["gamepad", "Gamepad Camera", true],
];

const WrapLabel = styled.span`
  width: 48px;
`;

function ToolSet({ tools }) {
  return tools.map(([icon, label, wrap]) => (
    <Tool key={label} $wrap={wrap}>
      <Icon name={icon} size={wrap ? 18 : 20} />
      {wrap ? <WrapLabel>{label}</WrapLabel> : label}
    </Tool>
  ));
}

function TabSet({ tabs, active }) {
  return tabs.map(tab => (
    <ShelfTab key={tab} $active={tab === active}>
      {tab}
    </ShelfTab>
  ));
}

/* ---------- panes ---------- */

const Main = styled.main`
  display: flex;
  flex: 1;
  min-height: 0;
`;

const ScenePane = styled.section`
  display: flex;
  flex-direction: column;
  flex: 1292 1 0;
  min-width: 0;
  padding-left: 7px;
  background: #3a3a3a;
  border-left: 1px solid #0c0c0c;
`;

const Splitter = styled.div`
  display: grid;
  place-items: center;
  flex: none;
  width: ${props => (props.$row ? "auto" : "8px")};
  height: ${props => (props.$row ? "7px" : "auto")};
  background: #444;
  border: solid #0c0c0c;
  border-width: ${props => (props.$row ? "0" : "0 0 0 1px")};
  ${props => props.$row && "border-top: 1px solid #7b7b7b;"}
  &::after {
    content: "";
    width: ${props => (props.$row ? "22px" : "5px")};
    height: ${props => (props.$row ? "5px" : "22px")};
    background: radial-gradient(circle, #999 1px, transparent 1px) 0 0 / 3px 3px;
  }
`;

const SidePane = styled.section`
  display: flex;
  flex-direction: column;
  flex: 612 1 0;
  min-width: 0;
`;

const PaneTabs = styled.div`
  display: flex;
  flex: none;
  height: 19px;
  background: #2d2d2d;
`;

const PaneTab = styled.div`
  display: flex;
  align-items: center;
  gap: ${props => (props.$active ? "11px" : "8px")};
  flex: none;
  height: 19px;
  padding: 0 4px 0 6px;
  font-size: 10px;
  line-height: 18px;
  white-space: nowrap;
  border-right: 2px solid #222;
  background: ${props => (props.$active ? "#474747" : "#303030")};
  font-style: ${props => (props.$italic ? "italic" : "normal")};
`;

const CloseButton = styled.button`
  display: grid;
  place-items: center;
  width: 9px;
`;

function Tab({ label, active, italic }) {
  return (
    <PaneTab $active={active} $italic={italic}>
      <button>{label}</button>
      <CloseButton aria-label={`Close ${label}`}>
        <Icon name="cross" size={6} />
      </CloseButton>
    </PaneTab>
  );
}

function TabTail() {
  return (
    <>
      <BarIconButton aria-label="New tab">
        <Icon name="plus" size={10} />
      </BarIconButton>
      <BarIconButton $narrow $end aria-label="Maximize pane">
        <Icon name="maxi" size={11} />
      </BarIconButton>
      <BarIconButton $narrow aria-label="Pane menu">
        <Icon name="down" size={8} />
      </BarIconButton>
    </>
  );
}

const PathBar = styled.div`
  display: flex;
  align-items: center;
  flex: none;
  height: 34px;
  padding-right: 2px;
  background: linear-gradient(#494949, #404040);
  border-bottom: 1px solid #0c0c0c;
`;

const IconButton = styled.button`
  display: grid;
  place-items: center;
  flex: none;
  width: 24px;
`;

const PathField = styled.label`
  display: flex;
  align-items: center;
  gap: 5px;
  flex: 1;
  height: 24px;
  margin: 0 6px 0 5px;
  padding-left: 6px;
  background: linear-gradient(#363636, #424242);
  border: 1px solid #0a0a0a;
`;

const PathInput = styled.input`
  flex: 1;
`;

const PathDrop = styled.span`
  display: grid;
  place-items: center;
  align-self: stretch;
  width: 18px;
  background: #303030;
`;

function Path({ children }) {
  return (
    <PathBar>
      <IconButton aria-label="Back"><Icon name="back" size={15} /></IconButton>
      <IconButton aria-label="Forward"><Icon name="forward" size={15} /></IconButton>
      <PathField>
        <Icon name="clapper" size={17} />
        <PathInput aria-label="Network path" defaultValue="obj" />
        <PathDrop><Icon name="downDim" size={8} /></PathDrop>
      </PathField>
      <IconButton aria-label="Pin"><Icon name="pin" size={15} /></IconButton>
      <IconButton aria-label="Follow selection"><Icon name="target" size={17} /></IconButton>
      {children}
    </PathBar>
  );
}

/* ---------- scene view ---------- */

const ViewBar = styled.div`
  display: flex;
  align-items: center;
  flex: none;
  height: 32px;
  background: #2e2e2e;
  border-bottom: 1px solid #0c0c0c;
`;

const ViewLabel = styled.strong`
  font-size: 12px;
  margin-left: 2px;
`;

const ViewTools = styled.div`
  display: flex;
  align-items: center;
  gap: 2px;
  height: 24px;
`;

const ToolButton = styled.button`
  position: relative;
  display: grid;
  place-items: center;
  flex: none;
  width: ${props => props.$w || "24px"};
  height: ${props => props.$h || "24px"};
  ${props =>
    props.$on &&
    css`
      background: #587393;
      box-shadow: inset 0 0 0 1px #6f8bab;
    `}
  ${props =>
    props.$more &&
    css`
      &::after {
        content: "";
        position: absolute;
        right: 0;
        bottom: 4px;
        border: solid transparent;
        border-width: 3px 0 3px 4px;
        border-left-color: ${props.$on ? "#1f2a38" : "#8d8d8d"};
      }
    `}
  ${props =>
    props.$drop &&
    css`
      &::after {
        content: "";
        position: absolute;
        right: 4px;
        bottom: 0;
        border: solid transparent;
        border-width: 4px 3px 0;
        border-top-color: #8d8d8d;
      }
    `}
`;

const VRule = styled.span`
  width: 1px;
  height: 24px;
  margin: 0 2px;
  background: #4d4d4d;
`;

const ViewBody = styled.div`
  display: flex;
  flex: 1;
  min-height: 0;
`;

const SideBar = styled.div`
  display: flex;
  flex-direction: column;
  align-items: center;
  flex: none;
  width: ${props => props.$width};
  background: #3a3a3a;
  overflow: hidden;
`;

const SideCap = styled.div`
  display: flex;
  align-self: stretch;
  flex: none;
  height: 9px;
  justify-content: ${props => (props.$right ? "flex-end" : "flex-start")};
  margin-bottom: ${props => (props.$right ? "20px" : "7px")};
  background: linear-gradient(#555, #2a2a2a);
  border-bottom: 1px solid #0c0c0c;
`;

const ModeGroup = styled.div`
  border: 1px solid #0c0c0c;
  background: #444;
`;

const HRule = styled.span`
  align-self: stretch;
  flex: none;
  height: 1px;
  margin: ${props => props.$gap} 1px;
  background: #555;
`;

const Spacer = styled.span`
  flex: 1;
`;

const Viewport = styled.div`
  position: relative;
  flex: 1;
  min-width: 0;
  background: linear-gradient(#67808d, #93a3aa 52%, #adb8ba 76%, #c1c9c9);
`;

const Scene = styled.svg`
  position: absolute;
  width: 100%;
  height: 100%;
`;

const ViewPills = styled.div`
  position: absolute;
  top: 4px;
  right: 6px;
  display: flex;
  gap: 7px;
`;

const Pill = styled.button`
  display: flex;
  align-items: center;
  gap: 2px;
  height: 20px;
  padding: 0 6px;
  color: #eef2f4;
  font-size: 11px;
  border: 1px solid #b5c2c9;
  border-radius: 10px;
  background: #6a818e;
`;

// Ground plane to screen, x and z in scene units.
function project(x, z) {
  const w = 1 - 0.128 * x - 0.133 * z;
  return [(620 + 101.1 * x - 263.2 * z) / w, (362 + 42.6 * x + 42.2 * z) / w];
}

function gridLine(a, b) {
  const [x1, y1] = project(...a);
  const [x2, y2] = project(...b);
  return `M${x1.toFixed(1)} ${y1.toFixed(1)}L${x2.toFixed(1)} ${y2.toFixed(1)}`;
}

function buildGrid() {
  const major = [];
  const minor = [];
  for (let i = -70; i <= 25; i += 1) {
    const v = i / 5;
    const out = i % 5 === 0 ? major : minor;
    const near = Math.min(6, 6.5 - v);
    out.push(gridLine([v, -16], [v, near]));
    out.push(gridLine([-16, v], [near, v]));
  }
  return [major.join(""), minor.join("")];
}

const [majorLines, minorLines] = buildGrid();

const axisMarks = [
  { n: "0", x: 616, y: 356, size: 14, turn: 60, fill: "#8f7f88" },
  { n: "0", x: 617, y: 370, size: 14, turn: -60, fill: "#7c86a0" },
  { n: "1", x: 825, y: 456, size: 17, turn: 45, fill: "#917680" },
  { n: "2", x: 1100, y: 593, size: 24, turn: 20, fill: "#a18489" },
  { n: "1", x: 406, y: 477, size: 17, turn: -50, fill: "#6d7699" },
  { n: "2", x: 118, y: 623, size: 24, turn: -130, fill: "#7f83a5" },
  { n: "-1", x: 776, y: 290, size: 13, turn: 150, fill: "#68747f" },
  { n: "-2", x: 904, y: 223, size: 12, turn: 160, fill: "#68747f" },
  { n: "-3", x: 1011, y: 171, size: 11, turn: 160, fill: "#626f7a" },
  { n: "-4", x: 1098, y: 127, size: 10, turn: 160, fill: "#5d6b76" },
  { n: "-5", x: 1172, y: 90, size: 9, turn: 160, fill: "#5a6873" },
  { n: "-1", x: 456, y: 276, size: 13, turn: -160, fill: "#68747f" },
  { n: "-3", x: 225, y: 162, size: 11, turn: 190, fill: "#626f7a" },
  { n: "-4", x: 138, y: 119, size: 10, turn: 190, fill: "#5d6b76" },
  { n: "-5", x: 63, y: 82, size: 9, turn: 190, fill: "#5a6873" },
];

function Ground() {
  return (
    <Scene viewBox="0 0 1233 726" preserveAspectRatio="xMidYMid slice" aria-label="Ground grid">
      <defs>
        <linearGradient id="fade" x1="0" y1="0" x2="0" y2="1">
          <stop offset="0" stopColor="#fff" stopOpacity="0.35" />
          <stop offset="0.4" stopColor="#fff" stopOpacity="0.85" />
          <stop offset="1" stopColor="#fff" />
        </linearGradient>
        <mask id="ground">
          <rect width="1233" height="726" fill="url(#fade)" />
        </mask>
      </defs>
      <g mask="url(#ground)" fill="none">
        <path d={minorLines} stroke="#5f727b" strokeOpacity="0.42" />
        <path d={majorLines} stroke="#5f727b" strokeOpacity="0.45" strokeWidth="2" />
      </g>
      {axisMarks.map(m => (
        <text
          key={`${m.x}-${m.y}`}
          fontSize={m.size}
          fontWeight="700"
          fill={m.fill}
          fillOpacity="0.85"
          textAnchor="middle"
          transform={`translate(${m.x} ${m.y}) rotate(${m.turn})`}
          dy="0.35em"
        >
          {m.n}
        </text>
      ))}
      <g fill="none" strokeWidth="1.3">
        <path d="M21 704v-16" stroke="#2fe03a" />
        <path d="M21 704l12 6" stroke="#d8342f" />
        <path d="M21 704l-12 6" stroke="#2321cf" />
      </g>
      <g fontSize="12" fontWeight="700" textAnchor="middle">
        <text x="24" y="689" fill="#3fe048">y</text>
        <text x="36" y="711" fill="#e0342f">x</text>
        <text x="11" y="711" fill="#2321cf">z</text>
      </g>
    </Scene>
  );
}

const leftTools = [
  [["arrow", 1], ["lockSel", 0, 1], ["move"], ["rotate"], ["scale"], ["pose"], ["handles", 1]],
  [["magGrid", 1], ["magCurve", 1], ["magPoint", 1], ["magnet", 1]],
  [["viewTool", 1, 1], ["render"], ["flipbook", 1]],
];

const displayTools = [
  ["plane", 1, 1], ["greenGrid", 1], ["lock"], ["bulbOff"], ["balls", 1], ["bulb", 1, 1],
  ["bulbPlus", 1], ["bulbShadow", 1], ["checker", 1, 1], ["glasses", 1], ["glassesPlay", 1],
];
const markerTools = [
  ["dot"], ["dotVec"], ["dotLine"], ["pointNum"], ["primFace"], ["primNum"], ["hull"],
  ["normals"], ["uv", 1], ["diamond"], ["greenBox"], ["axes"], ["equals"], ["image", 1, 1],
];

function SideTools({ tools, w, h, size }) {
  return tools.map(([name, more, on]) => (
    <ToolButton key={name} $w={w} $h={h} $more={more} $on={on} aria-label={name}>
      <Icon name={name} size={size} />
    </ToolButton>
  ));
}

function SceneView() {
  return (
    <ScenePane>
      <PaneTabs>
        <Tab label="Scene View" active />
        <Tab label="Animation Editor" />
        <Tab label="Render View" />
        <Gap $width="200px" />
        <Tab label="Geometry Spreadsheet" />
        <TabTail />
      </PaneTabs>
      <Path>
        <Gap $width="10px" />
        <ToolButton $drop aria-label="Display"><Icon name="cube" size={18} /></ToolButton>
        <ToolButton $drop aria-label="Shading"><Icon name="shapes" size={18} /></ToolButton>
        <ToolButton $drop aria-label="Background"><Icon name="swatch" size={17} /></ToolButton>
      </Path>
      <ViewBar>
        <CollapseGrip />
        <ToolButton $drop aria-label="View tool"><Icon name="camera" size={16} /></ToolButton>
        <ViewLabel>View</ViewLabel>
        <Gap $width="468px" />
        <ViewTools>
          <ToolButton $w="30px" $drop aria-label="Select points"><Icon name="selectRing" /></ToolButton>
          <ToolButton $w="30px" $drop aria-label="Select edges"><Icon name="selectLine" /></ToolButton>
          <ToolButton $w="30px" $drop aria-label="Select faces"><Icon name="selectFace" /></ToolButton>
          <VRule />
          <ToolButton $on aria-label="Select groups"><Icon name="groups" /></ToolButton>
          <ToolButton aria-label="Zoom to box"><Icon name="zoomBox" size={16} /></ToolButton>
          <VRule />
          <ToolButton aria-label="Disable"><Icon name="noEntry" size={17} /></ToolButton>
          <VRule />
          <ToolButton aria-label="Inspect"><Icon name="bug" /></ToolButton>
          <ToolButton aria-label="Settings"><Icon name="gear" size={15} /></ToolButton>
        </ViewTools>
        <Spacer />
        <ToolButton $drop aria-label="Network"><Icon name="net" size={17} /></ToolButton>
        <ToolButton aria-label="Help"><Icon name="help" size={15} /></ToolButton>
      </ViewBar>
      <ViewBody>
        <SideBar $width="33px">
          <SideCap>
            <svg width="10" height="8" viewBox="0 0 10 8" aria-hidden="true">
              <path d="M8 1v6L2 4z" fill="#050505" />
            </svg>
          </SideCap>
          <ModeGroup>
            <SideTools tools={[["objSel", 1, 1], ["compSel", 1], ["dynSel", 1]]} h="23px" size={18} />
          </ModeGroup>
          <HRule $gap="6px" />
          {leftTools.map((tools, i) => [
            i > 0 && <HRule key={i} $gap="4px" />,
            <SideTools key={`set${i}`} tools={tools} w="26px" h="28px" size={18} />,
          ])}
          <Spacer />
          <SideTools tools={[["hand", 1], ["film", 1]]} w="26px" h="25px" size={17} />
        </SideBar>
        <Viewport>
          <Ground />
          <ViewPills>
            <Pill>Persp <Icon name="down" size={7} /></Pill>
            <Pill>No cam <Icon name="down" size={7} /></Pill>
          </ViewPills>
        </Viewport>
        <SideBar $width="26px">
          <SideCap $right>
            <svg width="10" height="8" viewBox="0 0 10 8" aria-hidden="true">
              <path d="M2 1v6l6-3z" fill="#050505" />
            </svg>
          </SideCap>
          <SideTools tools={displayTools} w="22px" h="25px" size={16} />
          <HRule $gap="1px" />
          <SideTools tools={markerTools} w="22px" h="25px" size={16} />
          <HRule $gap="5px" />
          <SideTools tools={[["marker", 1, 1]]} w="22px" h="25px" size={17} />
          <Spacer />
          <SideTools tools={[["downDim"]]} w="22px" h="20px" size={9} />
        </SideBar>
      </ViewBody>
    </ScenePane>
  );
}

/* ---------- right hand panes ---------- */

const ParmBody = styled.div`
  display: grid;
  place-items: center;
  flex: 349 1 0;
  color: #707070;
  font-size: 11px;
  background: #3a3a3a;
`;

const NetMenu = styled.nav`
  display: flex;
  align-items: center;
  flex: none;
  height: 25px;
  background: linear-gradient(#333, #3c3c3c);
  border-bottom: 1px solid #0c0c0c;
`;

const NetMenuList = styled.div`
  display: flex;
  gap: 13px;
  padding: 0 8px;
`;

const NetTools = styled.div`
  display: flex;
  flex: 1;
  justify-content: space-between;
  min-width: 0;
`;

const NetBody = styled.div`
  display: flex;
  flex-direction: column;
  flex: 293 1 0;
  padding: 16px 10px;
  background: #2f2f2f;
`;

const NetTitle = styled.p`
  text-align: right;
  color: #505050;
  font-size: 24px;
  font-weight: 700;
  line-height: 28px;
`;

const NetHint = styled.p`
  margin: 124px 0 0;
  text-align: center;
  color: #484848;
  font-size: 19px;
  line-height: 27px;
`;

const netMenus = ["Add", "Edit", "Go", "View", "Tools", "Layout", "Labs", "Help"];
const netTools = [
  ["wrench", "tree", "list"],
  ["palette", "gridList"],
  ["layout", "note", "picture", "barrel"],
  ["search", "eye"],
];

const NetToolGroup = styled.div`
  display: flex;
`;

function RightPane() {
  return (
    <SidePane>
      <PaneTabs>
        <Tab label="Parameters" active italic />
        <Tab label="Take List" />
        <Tab label="Performance Monitor" />
        <TabTail />
      </PaneTabs>
      <Path />
      <ParmBody>No Operator Selected</ParmBody>
      <Splitter $row />
      <PaneTabs>
        <Tab label="/obj" active italic />
        <Tab label="Tree View" />
        <Tab label="Material Palette" />
        <Tab label="Asset Browser" />
        <TabTail />
      </PaneTabs>
      <Path />
      <NetMenu>
        <CollapseGrip />
        <NetMenuList>
          {netMenus.map(m => <MenuButton key={m}>{m}</MenuButton>)}
        </NetMenuList>
        <NetTools>
          {netTools.map(group => (
            <NetToolGroup key={group[0]}>
              {group.map(name => (
                <IconButton key={name} aria-label={name}><Icon name={name} size={16} /></IconButton>
              ))}
            </NetToolGroup>
          ))}
        </NetTools>
      </NetMenu>
      <NetBody>
        <NetTitle>Objects</NetTitle>
        <NetHint>
          Empty Network
          <br />
          Press Tab to Add Objects
        </NetHint>
      </NetBody>
    </SidePane>
  );
}

/* ---------- playbar ---------- */

const Playbar = styled.footer`
  display: flex;
  flex: none;
  height: 71px;
  background: #2e2e2e;
  border-top: 1px solid #6b6b6b;
  border-bottom: 1px solid #0a0a0a;
`;

const Transport = styled.div`
  display: flex;
  flex-direction: column;
  gap: 8px;
  width: 226px;
  padding: 7px 0 0 6px;
`;

const ButtonRow = styled.div`
  display: flex;
  gap: 1px;
`;

const BevelButton = styled.button`
  display: grid;
  place-items: center;
  width: ${props => props.$w || "26px"};
  height: ${props => props.$h || "28px"};
  background: ${props => (props.$on ? "#6883a8" : "linear-gradient(#505050, #3c3c3c)")};
  box-shadow: 1px 1px 0 #151515;
  ${props => props.$dim && "background: #3a3a3a;"}
`;

const FrameField = styled.input`
  width: ${props => props.$w};
  height: ${props => props.$h || "23px"};
  padding-left: 4px;
  color: #e2e2e2;
  font-family: "DejaVu Sans Mono", "Liberation Mono", monospace;
  font-size: 11px;
  background: ${props => (props.$dim ? "#262626" : "#131313")};
  ${props => props.$gap && "margin: 0 3px;"}
`;

const TimeColumn = styled.div`
  flex: 1;
  min-width: 0;
`;

const Timeline = styled.svg`
  width: 100%;
  height: 42px;
`;

const RangeRow = styled.div`
  display: flex;
  align-items: center;
  gap: 3px;
`;

const RangeTrack = styled.div`
  display: flex;
  align-items: center;
  flex: 1;
`;

const RangeSlider = styled.input`
  appearance: none;
  flex: 1;
  height: 12px;
  background: linear-gradient(#777, #777) center / 100% 3px no-repeat;
  &::-webkit-slider-thumb {
    appearance: none;
    width: 7px;
    height: 12px;
    background: #aaa;
    clip-path: polygon(0 0, 100% 50%, 0 100%);
  }
`;

const KeyColumn = styled.div`
  display: flex;
  flex-direction: column;
  gap: 4px;
  width: 250px;
  padding: 8px 7px 0 63px;
  font-size: 11px;
`;

const KeyRow = styled.div`
  display: flex;
  gap: 6px;
`;

const KeyStatus = styled.button`
  display: flex;
  align-items: center;
  justify-content: space-between;
  flex: 1;
  height: 24px;
  padding: 0 5px 0 15px;
  background: linear-gradient(#3c3c3c, #4a4a4a);
  box-shadow: 1px 1px 0 #151515;
`;

const frame = f => (f - 1) * 5.975;
const majorFrames = [24, 48, 72, 96, 120, 144, 168, 192, 216, 240];
const minorFrames = Array.from({ length: 40 }, (_, i) => (i + 1) * 6).filter(f => f % 24);

function PlayControls() {
  return (
    <Playbar>
      <CollapseGrip down />
      <Transport>
        <ButtonRow>
          <BevelButton aria-label="First frame"><Icon name="toStart" size={19} /></BevelButton>
          <BevelButton aria-label="Play backward"><Icon name="playBack" size={15} /></BevelButton>
          <BevelButton $on aria-label="Stop"><Icon name="stop" /></BevelButton>
          <BevelButton aria-label="Play"><Icon name="play" size={15} /></BevelButton>
          <BevelButton aria-label="Last frame"><Icon name="toEnd" size={19} /></BevelButton>
          <FrameField $w="46px" $h="28px" $gap aria-label="Current frame" defaultValue="1" />
          <BevelButton $w="13px" aria-label="Previous frame"><Icon name="stepBack" size={10} /></BevelButton>
          <BevelButton $w="13px" aria-label="Next frame"><Icon name="stepFwd" size={10} /></BevelButton>
        </ButtonRow>
        <ButtonRow>
          <BevelButton $h="23px" aria-label="Options"><Icon name="doc" size={17} /></BevelButton>
          <BevelButton $h="23px" aria-label="Audio"><Icon name="speaker" size={18} /></BevelButton>
          <BevelButton $h="23px" aria-label="Loop"><Icon name="loop" size={17} /></BevelButton>
          <BevelButton $h="23px" aria-label="Real time"><Icon name="clock" size={17} /></BevelButton>
          <Gap $width="3px" />
          <BevelButton $w="22px" $h="23px" $dim aria-label="Previous key"><Icon name="keyBack" size={12} /></BevelButton>
          <BevelButton $w="22px" $h="23px" $dim aria-label="Next key"><Icon name="keyFwd" size={12} /></BevelButton>
        </ButtonRow>
      </Transport>
      <TimeColumn>
        <Timeline viewBox="0 0 1435 42" preserveAspectRatio="xMinYMid meet" aria-label="Timeline">
          <path d="M0 22H1435" stroke="#c2c2b8" strokeWidth="1.5" />
          {majorFrames.map(f => (
            <g key={f}>
              <path d={`M${frame(f)} 15v14`} stroke="#c2c2b8" />
              {f < 240 && <text x={frame(f)} y="9" fill="#9a9a9a" fontSize="10">{f}</text>}
            </g>
          ))}
          {minorFrames.map(f => (
            <path key={f} d={`M${frame(f)} 18v9`} stroke="#a2a29a" />
          ))}
          <path d="M1 23V2h23v16H6z" fill="#050505" stroke="#fff" strokeWidth="1.5" />
          <text x="9" y="15" fill="#fff" fontSize="13">1</text>
        </Timeline>
        <RangeRow>
          <FrameField $w="42px" $dim aria-label="Global start" defaultValue="1" />
          <FrameField $w="42px" aria-label="Range start" defaultValue="1" />
          <RangeTrack>
            <RangeSlider type="range" min="1" max="240" defaultValue="1" aria-label="Playback range" />
            <svg width="7" height="12" viewBox="0 0 7 12" aria-hidden="true">
              <path d="M7 0v12L0 6z" fill="#aaa" />
            </svg>
          </RangeTrack>
          <FrameField $w="42px" aria-label="Range end" defaultValue="240" />
          <FrameField $w="42px" $dim aria-label="Global end" defaultValue="240" />
        </RangeRow>
      </TimeColumn>
      <KeyColumn>
        <KeyRow>
          <BevelButton $w="22px" $h="24px" aria-label="Keys"><Icon name="keys" size={16} /></BevelButton>
          <KeyStatus>0 keys, 0/0 channels <Icon name="upDim" size={9} /></KeyStatus>
        </KeyRow>
        <KeyRow>
          <BevelButton $w="22px" $h="24px" aria-label="Curves"><Icon name="curve" size={16} /></BevelButton>
          <SelectBox label="Key mode" value="Key All Channels" width="151px" />
        </KeyRow>
      </KeyColumn>
    </Playbar>
  );
}

const StatusBar = styled.div`
  display: flex;
  align-items: center;
  justify-content: flex-end;
  gap: 4px;
  flex: none;
  height: 24px;
  padding-right: 2px;
  font-size: 11px;
  background: #393939;
  border-bottom: 1px solid #0c0c0c;
`;

const Watermark = styled.p`
  position: absolute;
  z-index: 20;
  right: 51px;
  bottom: 51px;
  display: flex;
  align-items: center;
  gap: 23px;
  color: #fff;
  font-size: 55px;
  line-height: 64px;
  text-shadow: 2px 3px 3px #1b1b1b;
  pointer-events: none;
`;

const Brand = styled.strong`
  font-size: 57px;
  font-weight: 700;
`;

export default function App() {
  return (
    <>
      <GlobalStyle />
      <Window>
        <TitleBar>
          <svg width="20" height="20" viewBox="0 0 20 20" aria-hidden="true">
            <path d="M0 0h20v20H0z" fill="#f0652a" />
            <g fill="none" stroke="#fff" strokeWidth="1.8">
              <path d="M0 6q7-5 13-1t4 10q-2 4-5 5" />
              <path d="M0 11q3-5 8-3t4 7q-2 4-6 3-4-2-1-5 3-1 3 1" />
            </g>
          </svg>
          <Title>untitled.hip - Houdini FX 19.0.383 - Python 3</Title>
          <WindowButton aria-label="Minimize">
            <svg width="12" height="12" viewBox="0 0 12 12"><path d="M0 6.500h12" stroke="#111" /></svg>
          </WindowButton>
          <WindowButton aria-label="Restore">
            <svg width="12" height="12" viewBox="0 0 12 12">
              <path d="M.5 3.500h8v8h-8zM3 3V1h8v8H9" fill="none" stroke="#111" />
            </svg>
          </WindowButton>
          <WindowButton aria-label="Close">
            <svg width="12" height="12" viewBox="0 0 12 12">
              <path d="M0 0l12 12M12 0L0 12" stroke="#111" strokeWidth="1.2" />
            </svg>
          </WindowButton>
        </TitleBar>
        <MenuBar>
          <CollapseGrip />
          <MenuList>
            {["File", "Edit", "Render", "Assets", "Windows", "Help"].map(m => (
              <MenuButton key={m}>{m}</MenuButton>
            ))}
          </MenuList>
          <DesktopPicker />
          <SelectBox label="Radial menu" value="Main" icon="aim" width="128px" />
          <Spacer />
          <SelectBox label="Take" value="Main" icon="slate" width="171px" />
          <Gap $width="4px" />
          <IconButton aria-label="Help"><Icon name="help" size={14} /></IconButton>
        </MenuBar>
        <Shelves>
          <CollapseGrip />
          <Shelf $grow={879}>
            <ShelfTabs>
              <TabSet tabs={createTabs} active="Create" />
              <Gap $width="225px" />
              <TabSet tabs={effectTabs} />
              <BarIconButton aria-label="Add shelf"><Icon name="plus" size={10} /></BarIconButton>
              <BarIconButton $narrow $end aria-label="Shelf menu"><Icon name="down" size={7} /></BarIconButton>
            </ShelfTabs>
            <Tools>
              <ToolSet tools={createTools} />
              <Gap $width="179px" />
              <ToolSet tools={moreTools} />
            </Tools>
          </Shelf>
          <ShelfGrip />
          <Shelf $grow={1021}>
            <ShelfTabs>
              <TabSet tabs={lightTabs} active="Lights and Cameras" />
              <BarIconButton aria-label="Add shelf"><Icon name="plus" size={10} /></BarIconButton>
              <BarIconButton $narrow $end aria-label="Shelf menu"><Icon name="down" size={7} /></BarIconButton>
            </ShelfTabs>
            <Tools>
              <ToolSet tools={lightTools} />
            </Tools>
          </Shelf>
        </Shelves>
        <Main>
          <SceneView />
          <Splitter />
          <RightPane />
        </Main>
        <PlayControls />
        <StatusBar>
          <IconButton aria-label="Cook status"><Icon name="brain" size={17} /></IconButton>
          <IconButton aria-label="Recook"><Icon name="refresh" size={15} /></IconButton>
          <SelectBox label="Update mode" value="Auto Update" width="116px" />
        </StatusBar>
        <Watermark>
          <Brand>知乎</Brand>@樱桃小嘴拆拆怪
        </Watermark>
      </Window>
    </>
  );
}
